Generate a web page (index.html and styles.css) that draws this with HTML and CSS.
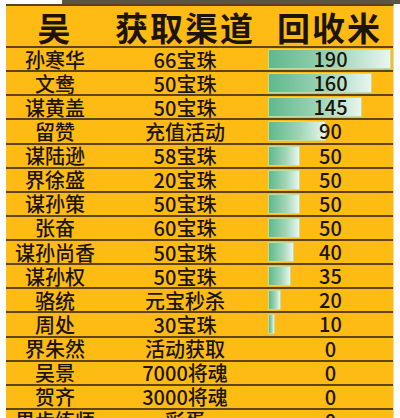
FILE: index.html
```html
<!DOCTYPE html>
<html lang="zh">
<head>
    <meta charset="UTF-8">
    <meta name="viewport" content="width=device-width, initial-scale=1.0">
    <title>吴 回收米</title>
    <link rel="stylesheet" href="styles.css">
</head>
<body>
    <div class="topbar"></div>
    <div class="board">
        <div class="row head">
            <div class="cell">吴</div>
            <div class="cell">获取渠道</div>
            <div class="cell">回收米</div>
        </div>

        <div class="row"><div class="cell">孙寒华</div><div class="cell">66宝珠</div><div class="cell value"><span class="bar" style="width: 100%"></span><span class="num">190</span></div></div>
        <div class="row"><div class="cell">文鸯</div><div class="cell">50宝珠</div><div class="cell value"><span class="bar" style="width: 84.2%"></span><span class="num">160</span></div></div>
        <div class="row"><div class="cell">谋黄盖</div><div class="cell">50宝珠</div><div class="cell value"><span class="bar" style="width: 76.3%"></span><span class="num">145</span></div></div>
        <div class="row"><div class="cell">留赞</div><div class="cell">充值活动</div><div class="cell value"><span class="bar" style="width: 47.4%"></span><span class="num">90</span></div></div>
        <div class="row"><div class="cell">谋陆逊</div><div class="cell">58宝珠</div><div class="cell value"><span class="bar" style="width: 26.3%"></span><span class="num">50</span></div></div>
        <div class="row"><div class="cell">界徐盛</div><div class="cell">20宝珠</div><div class="cell value"><span class="bar" style="width: 26.3%"></span><span class="num">50</span></div></div>
        <div class="row"><div class="cell">谋孙策</div><div class="cell">50宝珠</div><div class="cell value"><span class="bar" style="width: 26.3%"></span><span class="num">50</span></div></div>
        <div class="row"><div class="cell">张奋</div><div class="cell">60宝珠</div><div class="cell value"><span class="bar" style="width: 26.3%"></span><span class="num">50</span></div></div>
        <div class="row"><div class="cell">谋孙尚香</div><div class="cell">50宝珠</div><div class="cell value"><span class="bar" style="width: 21.1%"></span><span class="num">40</span></div></div>
        <div class="row"><div class="cell">谋孙权</div><div class="cell">50宝珠</div><div class="cell value"><span class="bar" style="width: 18.4%"></span><span class="num">35</span></div></div>
        <div class="row"><div class="cell">骆统</div><div class="cell">元宝秒杀</div><div class="cell value"><span class="bar" style="width: 10.5%"></span><span class="num">20</span></div></div>
        <div class="row"><div class="cell">周处</div><div class="cell">30宝珠</div><div class="cell value"><span class="bar" style="width: 5.3%"></span><span class="num">10</span></div></div>
        <div class="row"><div class="cell">界朱然</div><div class="cell">活动获取</div><div class="cell value"><span class="num">0</span></div></div>
        <div class="row"><div class="cell">吴景</div><div class="cell">7000将魂</div><div class="cell value"><span class="num">0</span></div></div>
        <div class="row"><div class="cell">贺齐</div><div class="cell">3000将魂</div><div class="cell value"><span class="num">0</span></div></div>
        <div class="row"><div class="cell">界步练师</div><div class="cell">彩蛋</div><div class="cell value"><span class="num">0</span></div></div>
    </div>
</body>
</html>
```

FILE: styles.css
```css
* {
    margin: 0;
    padding: 0;
    box-sizing: border-box;
}

body {
    font-family: "Noto Sans CJK SC", "Noto Sans", sans-serif;
    background: #ffffff;
    color: #1c1408;
    height: 418px;
    overflow: hidden;
}

.topbar {
    height: 4px;
    background: linear-gradient(to right, #ffffff 62px, #5e5446 62px);
}

.board {
    width: 388px;
    margin-left: 6px;
    background: #fdbb14;
    border-top: 2px solid #5a4216;
    border-right: 1px solid #efd9a0;
}

.row {
    display: grid;
    grid-template-columns: 98px 162px 127px;
    height: 24.13px;
    border-bottom: 2px solid #5e4418;
    align-items: center;
}

.row.head {
    height: 42px;
}

.cell {
    text-align: center;
    font-size: 20px;
    font-weight: 500;
    line-height: 20px;
    padding-top: 1px;
    white-space: nowrap;
}

.head .cell {
    font-size: 33px;
    font-weight: bold;
    letter-spacing: 2px;
    line-height: 38px;
    padding-top: 2px;
}

.value {
    display: grid;
    align-items: center;
    padding: 0 2px;
    height: 100%;
}

.bar,
.num {
    grid-area: 1 / 1;
}

.bar {
    display: block;
    height: 20px;
    background: linear-gradient(to right, #5fb98b 0%, #9fd5b6 55%, #e9f6ef 100%);
    border: 1px solid #c3dba0;
}

.num {
    text-align: center;
    padding-left: 2px;
}
```
